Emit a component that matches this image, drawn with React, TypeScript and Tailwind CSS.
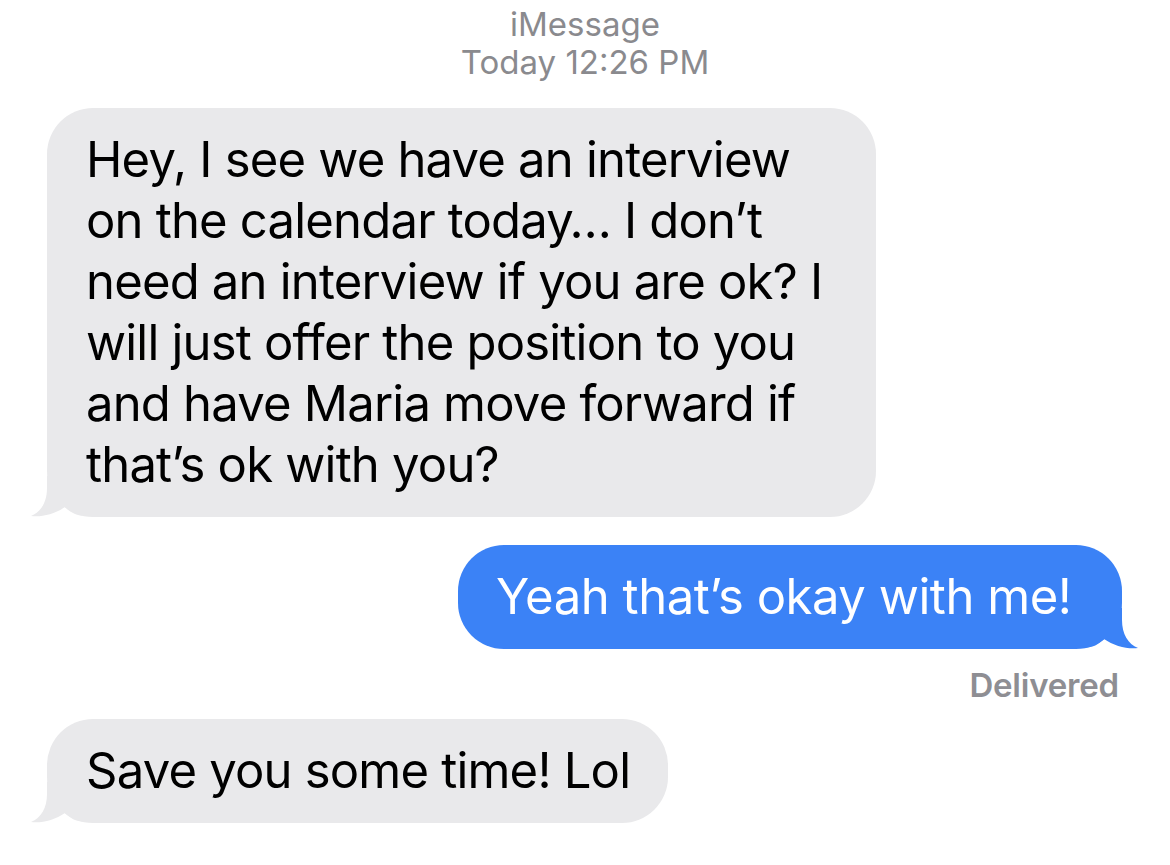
type Side = 'left' | 'right';

function Tail({ side, color }: { side: Side; color: string }) {
  const pos = side === 'left' ? 'left-[-16px]' : 'right-[-16px]';
  return (
    <svg className={`absolute bottom-0 ${pos}`} width="60" height="41" viewBox="0 0 60 41">
      <g transform={side === 'right' ? 'translate(60,0) scale(-1,1)' : undefined}>
        <path
          d="M16,0 L16,12 C16,26 10,36 0,40 C10,41.5 24,38 34,31 C39,36 45,40 56,40 L60,40 L60,0 Z"
          fill={color}
        />
      </g>
    </svg>
  );
}

export default function App() {
  return (
    <div className="min-h-screen w-full bg-white pt-[5px] font-['Inter',sans-serif] antialiased">
      {/* thread header */}
      <div className="flex flex-col items-center text-[33px] leading-[38px] text-[#8a8a8e]">
        <p>iMessage</p>
        <p>Today 12:26 PM</p>
      </div>

      <div className="mt-[27px] flex flex-col px-[48px] text-[49px] leading-[61px] tracking-[-0.8px]">
        {/* incoming */}
        <div className="relative w-[829px] -ml-px rounded-[46px] bg-[#e9e9eb] pt-[21px] pb-[22px] pl-[39px] text-black">
          <p className="relative z-10">
            Hey, I see we have an interview
            <br />
            on the calendar today… I don’t
            <br />
            need an interview if you are ok? I
            <br />
            will just offer the position to you
            <br />
            and have Maria move forward if
            <br />
            that’s ok with you?
          </p>
          <Tail side="left" color="#e9e9eb" />
        </div>

        {/* outgoing */}
        <div className="relative mt-[28px] w-[664px] self-end rounded-[46px] bg-[#3b82f6] pt-[21px] pb-[22px] pl-[38px] text-white">
          <p className="relative z-10 tracking-[-0.45px]">Yeah that’s okay with me!</p>
          <Tail side="right" color="#3b82f6" />
        </div>

        <p className="mt-[18px] self-end pr-[3px] text-[33px] font-semibold leading-[36px] tracking-[-0.2px] text-[#8e8e93]">
          Delivered
        </p>

        {/* incoming */}
        <div className="relative mt-[16px] w-[621px] -ml-px rounded-[46px] bg-[#e9e9eb] pt-[21px] pb-[22px] pl-[39px] text-black">
          <p className="relative z-10">Save you some time! Lol</p>
          <Tail side="left" color="#e9e9eb" />
        </div>
      </div>
    </div>
  );
}
